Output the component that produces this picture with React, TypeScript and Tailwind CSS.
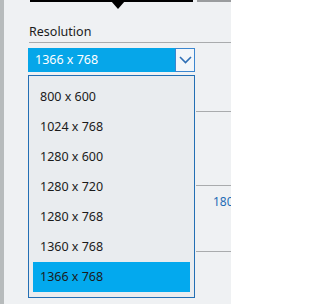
import React from "react";

const items = ["800 x 600", "1024 x 768", "1280 x 600", "1280 x 720", "1280 x 768", "1360 x 768", "1366 x 768"];

export default function App() {
  return (
    <div
      className="w-[231px] h-[304px] overflow-hidden bg-[#eff1f3] flex"
      style={{ fontFamily: '"Noto Sans", "Open Sans", sans-serif' }}
    >
      <div className="w-[4px] shrink-0 h-full bg-[#b7bbbc]" />
      <div className="flex-1 min-w-0 flex flex-col">
        {/* top bar */}
        <div className="flex h-[2px]">
          <div className="ml-[26px] w-[163px] shrink-0 h-[2px] bg-black relative">
            <div className="absolute left-[81px] top-[1px] w-0 h-0 border-l-[7px] border-r-[7px] border-t-[8px] border-l-transparent border-r-transparent border-t-black" />
          </div>
          <div className="ml-[4px] flex-1 h-[2px] bg-[#9a9c9e]" />
        </div>
        {/* label */}
        <div className="ml-[25px] mt-[22px] pb-[2px] border-b border-[#a9abad] text-[12.5px] leading-[16px] text-[#1b1b1b]">
          Resolution
        </div>
        <div className="flex mt-[5px]">
          <div className="ml-[24px] w-[167px] shrink-0 flex flex-col">
            {/* select */}
            <div className="h-[24px] bg-[#06a6e9] flex items-center">
              <span className="flex-1 pl-[7px] text-[12.5px] leading-[16px] text-white">1366 x 768</span>
              <div className="w-[20px] h-[24px] border border-[#3b86cf] bg-[#f3f6f9] flex items-center justify-center">
                <svg width="13" height="8" viewBox="0 0 13 8">
                  <polyline points="1,1 6.5,6.5 12,1" fill="none" stroke="#2f6fb5" strokeWidth="1.6" />
                </svg>
              </div>
            </div>
            {/* list */}
            <div className="mt-[3px] h-[223px] border border-[#236fb4] bg-[#e9ecef] pt-[6px] pb-[5px] px-[4px] flex flex-col">
              {items.map((t, i) => (
                <div
                  key={t + i}
                  className={
                    i === items.length - 1
                      ? "h-[30px] flex items-center pl-[7px] bg-[#03a9ee] text-[12.5px] text-[#1b1b1b]"
                      : "h-[30px] flex items-center pl-[7px] text-[12.5px] text-[#1b1b1b]"
                  }
                >
                  {t}
                </div>
              ))}
            </div>
          </div>
          {/* right column */}
          <div className="flex-1 min-w-0 overflow-hidden flex flex-col pl-[1px]">
            <div className="h-[63px]" />
            <div className="h-[1px] bg-[#a9abad]" />
            <div className="h-[73px]" />
            <div className="h-[1px] bg-[#a9abad]" />
            <div className="pl-[17px] mt-[8px] whitespace-nowrap text-[12px] leading-[16px] text-[#1f6cb5]">180</div>
            <div className="h-[41px]" />
            <div className="h-[1px] bg-[#a9abad]" />
          </div>
        </div>
      </div>
    </div>
  );
}
